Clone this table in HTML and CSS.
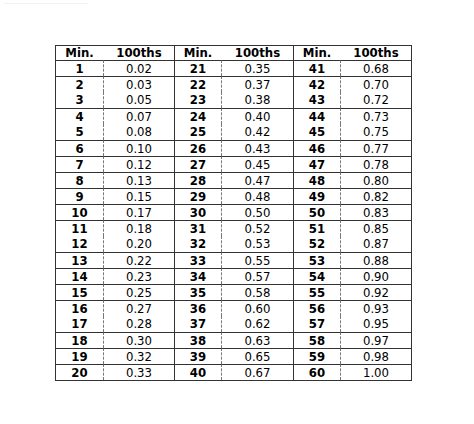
FILE: index.html
```
<!DOCTYPE html>
<html>
<head>
<meta charset="utf-8">
<link rel="stylesheet" href="styles.css">
</head>
<body>
<div class="topline"></div>
<table class="conv">
<thead>
<tr><th class="c1">Min.</th><th class="c2">100ths</th><th class="c3">Min.</th><th class="c4">100ths</th><th class="c5">Min.</th><th class="c6">100ths</th></tr>
</thead>
<tbody>
<tr class="s"><td class="c1">1</td><td class="c2">0.02</td><td class="c3">21</td><td class="c4">0.35</td><td class="c5">41</td><td class="c6">0.68</td></tr>
<tr class="s"><td class="c1">2</td><td class="c2">0.03</td><td class="c3">22</td><td class="c4">0.37</td><td class="c5">42</td><td class="c6">0.70</td></tr>
<tr><td class="c1">3</td><td class="c2">0.05</td><td class="c3">23</td><td class="c4">0.38</td><td class="c5">43</td><td class="c6">0.72</td></tr>
<tr class="s"><td class="c1">4</td><td class="c2">0.07</td><td class="c3">24</td><td class="c4">0.40</td><td class="c5">44</td><td class="c6">0.73</td></tr>
<tr><td class="c1">5</td><td class="c2">0.08</td><td class="c3">25</td><td class="c4">0.42</td><td class="c5">45</td><td class="c6">0.75</td></tr>
<tr class="s"><td class="c1">6</td><td class="c2">0.10</td><td class="c3">26</td><td class="c4">0.43</td><td class="c5">46</td><td class="c6">0.77</td></tr>
<tr class="s"><td class="c1">7</td><td class="c2">0.12</td><td class="c3">27</td><td class="c4">0.45</td><td class="c5">47</td><td class="c6">0.78</td></tr>
<tr class="s"><td class="c1">8</td><td class="c2">0.13</td><td class="c3">28</td><td class="c4">0.47</td><td class="c5">48</td><td class="c6">0.80</td></tr>
<tr class="s"><td class="c1">9</td><td class="c2">0.15</td><td class="c3">29</td><td class="c4">0.48</td><td class="c5">49</td><td class="c6">0.82</td></tr>
<tr class="s"><td class="c1">10</td><td class="c2">0.17</td><td class="c3">30</td><td class="c4">0.50</td><td class="c5">50</td><td class="c6">0.83</td></tr>
<tr class="s"><td class="c1">11</td><td class="c2">0.18</td><td class="c3">31</td><td class="c4">0.52</td><td class="c5">51</td><td class="c6">0.85</td></tr>
<tr><td class="c1">12</td><td class="c2">0.20</td><td class="c3">32</td><td class="c4">0.53</td><td class="c5">52</td><td class="c6">0.87</td></tr>
<tr class="s"><td class="c1">13</td><td class="c2">0.22</td><td class="c3">33</td><td class="c4">0.55</td><td class="c5">53</td><td class="c6">0.88</td></tr>
<tr class="s"><td class="c1">14</td><td class="c2">0.23</td><td class="c3">34</td><td class="c4">0.57</td><td class="c5">54</td><td class="c6">0.90</td></tr>
<tr class="s"><td class="c1">15</td><td class="c2">0.25</td><td class="c3">35</td><td class="c4">0.58</td><td class="c5">55</td><td class="c6">0.92</td></tr>
<tr class="s"><td class="c1">16</td><td class="c2">0.27</td><td class="c3">36</td><td class="c4">0.60</td><td class="c5">56</td><td class="c6">0.93</td></tr>
<tr><td class="c1">17</td><td class="c2">0.28</td><td class="c3">37</td><td class="c4">0.62</td><td class="c5">57</td><td class="c6">0.95</td></tr>
<tr class="s"><td class="c1">18</td><td class="c2">0.30</td><td class="c3">38</td><td class="c4">0.63</td><td class="c5">58</td><td class="c6">0.97</td></tr>
<tr class="s"><td class="c1">19</td><td class="c2">0.32</td><td class="c3">39</td><td class="c4">0.65</td><td class="c5">59</td><td class="c6">0.98</td></tr>
<tr class="s"><td class="c1">20</td><td class="c2">0.33</td><td class="c3">40</td><td class="c4">0.67</td><td class="c5">60</td><td class="c6">1.00</td></tr>
</tbody>
</table>
</body>
</html>
```
FILE: styles.css
```
html, body {
  margin: 0;
  padding: 0;
  background: #ffffff;
}
body {
  font-family: "DejaVu Sans Condensed", "DejaVu Sans", sans-serif;
  color: #000000;
}
.topline {
  width: 84px;
  height: 1px;
  margin: 3px 0 0 4px;
  background: #f2f2f2;
}
.conv {
  margin: 41px 0 0 55px;
  border: 1px solid #333333;
  border-collapse: separate;
  border-spacing: 0;
  table-layout: fixed;
  font-size: 13px;
}
.conv th, .conv td {
  padding: 0;
  box-sizing: border-box;
  text-align: center;
  vertical-align: middle;
  line-height: 14px;
}
.conv th {
  height: 14px;
  font-weight: bold;
}
.conv td {
  height: 16px;
}
.conv tr.s td {
  border-top: 1px solid #333333;
}
.conv .c1, .conv .c3, .conv .c5 {
  font-weight: bold;
}
.conv .c1 { width: 47px; }
.conv .c2 { width: 71px; border-left: 1px dashed #777777; }
.conv .c3 { width: 47px; border-left: 1px solid #333333; }
.conv .c4 { width: 72px; border-left: 1px dashed #777777; }
.conv .c5 { width: 47px; border-left: 1px solid #333333; }
.conv .c6 { width: 71px; border-left: 1px dashed #777777; }
.conv th.c2, .conv th.c4, .conv th.c6 {
  border-left: none;
  padding-left: 1px;
}
```
